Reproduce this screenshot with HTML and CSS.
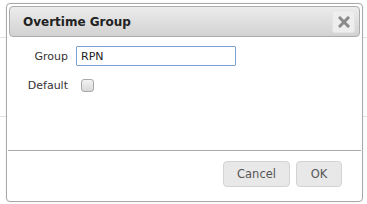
FILE: index.html
```html
<!DOCTYPE html>
<html>
<head>
<meta charset="utf-8">
<link rel="stylesheet" href="styles.css">
</head>
<body>
<div class="page">
  <div class="bg-row bg-row-1"></div>
  <div class="bg-row bg-row-2"></div>
</div>
<div class="dialog">
  <div class="titlebar">
    <span class="title">Overtime Group</span>
    <button class="close" type="button" aria-label="close">
      <svg width="12" height="12" viewBox="0 0 12 12"><path d="M2 2 L10 10 M10 2 L2 10" stroke="#8a8a8a" stroke-width="3" stroke-linecap="square"/></svg>
    </button>
  </div>
  <div class="content">
    <div class="row">
      <label class="lbl">Group</label>
      <input class="text" type="text" value="RPN">
    </div>
    <div class="row row-check">
      <label class="lbl">Default</label>
      <span class="check"></span>
    </div>
  </div>
  <div class="buttonpane">
    <button class="btn btn-cancel" type="button">Cancel</button>
    <button class="btn btn-ok" type="button">OK</button>
  </div>
</div>
</body>
</html>
```
FILE: styles.css
```css
html, body {
  margin: 0;
  padding: 0;
  background: #fff;
  width: 367px;
  height: 204px;
  overflow: hidden;
  font-family: "DejaVu Sans", Verdana, sans-serif;
}
.page {
  padding-top: 37px;
}
.bg-row {
  height: 0;
  border-top: 1px solid #e2e2e2;
}
.bg-row-2 {
  margin-top: 78px;
}
.dialog {
  position: absolute;
  top: 3px;
  left: 6px;
  width: 357px;
  height: 199px;
  box-sizing: border-box;
  border: 1px solid #a8a8a8;
  border-radius: 4px;
  background: #fff;
  padding: 2px;
  display: flex;
  flex-direction: column;
  box-shadow: 0 0 2px rgba(0,0,0,0.08);
}
.titlebar {
  height: 31px;
  box-sizing: border-box;
  border: 1px solid #acacac;
  border-radius: 4px;
  background: linear-gradient(#ececec, #d2d2d2);
  display: flex;
  align-items: center;
  justify-content: space-between;
  padding: 0 4px 0 13px;
}
.title {
  font-weight: bold;
  font-size: 12px;
  color: #222;
}
.close {
  width: 23px;
  height: 23px;
  border: 1px solid #e4e4e4;
  border-radius: 3px;
  background: #eeeeee;
  padding: 0;
  display: flex;
  align-items: center;
  justify-content: center;
}
.content {
  padding: 9px 0 0 0;
  flex: 1;
}
.row {
  display: flex;
  align-items: center;
  height: 20px;
}
.row-check {
  margin-top: 11px;
  height: 16px;
}
.lbl {
  width: 59px;
  text-align: right;
  font-size: 11px;
  color: #333;
  margin-right: 8px;
}
.text {
  width: 160px;
  height: 20px;
  box-sizing: border-box;
  border: 1px solid #7d9ed8;
  border-radius: 1px;
  padding: 0 4px;
  font-family: "DejaVu Sans", Verdana, sans-serif;
  font-size: 11px;
  color: #222;
  outline: none;
  margin: 0;
}
.check {
  width: 13px;
  height: 13px;
  margin-left: 5px;
  border: 1px solid #a9a9a9;
  border-radius: 3px;
  background: linear-gradient(#f4f4f4, #d8d8d8);
  box-sizing: border-box;
}
.buttonpane {
  border-top: 1px solid #aaaaaa;
  display: flex;
  justify-content: flex-end;
  gap: 6px;
  padding: 10px 19px 12px 0;
  margin: 0 -1px 0 -1px;
}
.btn {
  height: 26px;
  box-sizing: border-box;
  border: 1px solid #d3d3d3;
  border-radius: 4px;
  background: #e8e8e8;
  color: #555;
  font-family: "DejaVu Sans", Verdana, sans-serif;
  font-size: 11.5px;
  padding: 0;
}
.btn-cancel {
  width: 67px;
}
.btn-ok {
  width: 46px;
}
```
